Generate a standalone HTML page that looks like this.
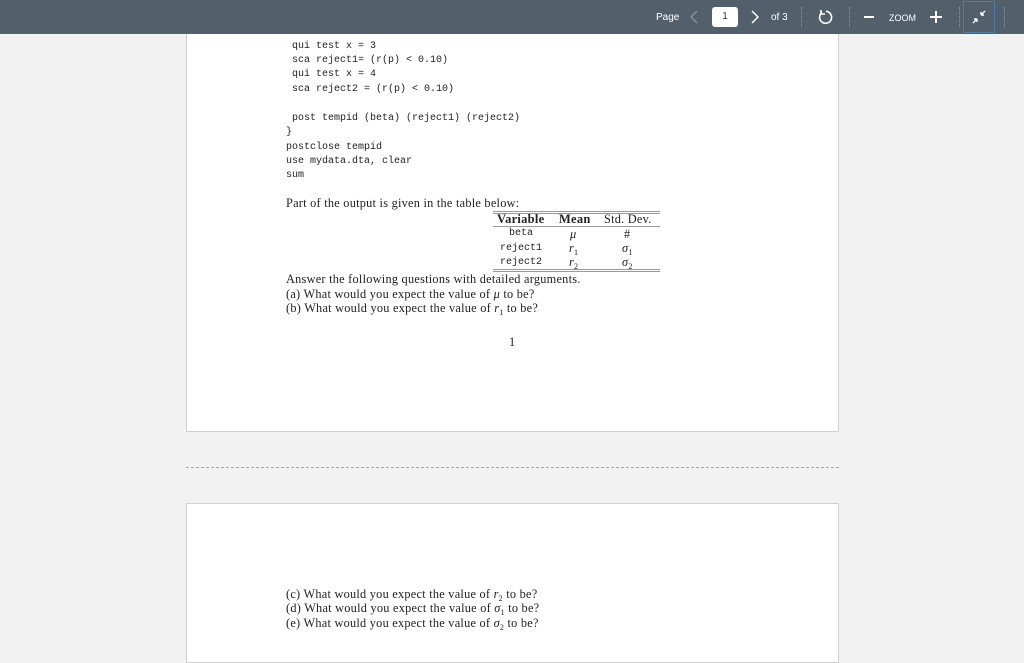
<!DOCTYPE html>
<html><head><meta charset="utf-8">
<style>
*{margin:0;padding:0;box-sizing:border-box}
body{width:1024px;height:640px;overflow:hidden;background:#f2f2f2;position:relative;font-family:"Liberation Serif",serif;color:#222}
.tb{position:absolute;left:0;top:0;width:1024px;height:34px;background:#535f6b;color:#fff;font-family:"Liberation Sans",sans-serif}
.tb .t{position:absolute;font-size:10px;top:12px}
.sep{position:absolute;top:7px;height:20px;border-left:1px dotted #8a96a0}
.page{position:absolute;left:186px;width:653px;background:#fff;border:1px solid #d0d0d0}
.a{position:absolute;white-space:pre;line-height:12px}
.m{font-family:"Liberation Mono",monospace;font-size:10px}
.s{font-size:12.3px;letter-spacing:0.25px}
.u{font-size:8px;position:relative;top:3px;font-style:normal}
.rule{position:absolute;left:493px;width:167px;border-top:1px solid #999}
</style></head><body>
<div class="tb">
 <div class="t" style="left:656px">Page</div>
 <svg style="position:absolute;left:690px;top:10px" width="8" height="14" viewBox="0 0 8 14"><path d="M7 1L1 7l6 6" fill="none" stroke="#8795a2" stroke-width="1.3"/></svg>
 <div style="position:absolute;left:712px;top:7px;width:26px;height:20px;background:#fff;border-radius:3px;color:#333;font-size:10px;text-align:center;line-height:20px">1</div>
 <svg style="position:absolute;left:751px;top:10px" width="8" height="14" viewBox="0 0 8 14"><path d="M1 1l6 6-6 6" fill="none" stroke="#fff" stroke-width="1.5"/></svg>
 <div class="t" style="left:771px">of 3</div>
 <div class="sep" style="left:801px"></div>
 <svg style="position:absolute;left:817px;top:9px" width="16" height="16" viewBox="0 0 16 16"><path d="M5 3.5A6 6 0 1 0 9 2.3" fill="none" stroke="#fff" stroke-width="1.6"/><path d="M4 1v4h4" fill="none" stroke="#fff" stroke-width="1.6"/></svg>
 <div class="sep" style="left:849px"></div>
 <div style="position:absolute;left:864px;top:16px;width:10px;height:2px;background:#fff"></div>
 <div class="t" style="left:889px;font-size:9px;top:13px">ZOOM</div>
 <div style="position:absolute;left:930px;top:16px;width:12px;height:2px;background:#fff"></div>
 <div style="position:absolute;left:935px;top:11px;width:2px;height:12px;background:#fff"></div>
 <div class="sep" style="left:959px"></div>
 <div style="position:absolute;left:963px;top:1px;width:32px;height:32px;border:1px solid #4a7ea8"></div>
 <svg style="position:absolute;left:972px;top:10px" width="14" height="14" viewBox="0 0 14 14"><path d="M1 13L5 9M5 9H2M5 9V12M13 1L9 5M9 5H12M9 5V2" fill="none" stroke="#fff" stroke-width="1.4"/></svg>
 <div class="sep" style="left:1004px"></div>
</div>
<div class="page" style="top:34px;height:398px;border-top:none"></div>
<div style="position:absolute;left:186px;top:467px;width:653px;border-top:1px dashed #aaa"></div>
<div class="page" style="top:503px;height:160px"></div>

<div class="a m" style="left:292px;top:41px">qui test x = 3</div>
<div class="a m" style="left:292px;top:55px">sca reject1= (r(p) &lt; 0.10)</div>
<div class="a m" style="left:292px;top:69px">qui test x = 4</div>
<div class="a m" style="left:292px;top:84px">sca reject2 = (r(p) &lt; 0.10)</div>
<div class="a m" style="left:292px;top:113px">post tempid (beta) (reject1) (reject2)</div>
<div class="a m" style="left:286px;top:127px">}</div>
<div class="a m" style="left:286px;top:142px">postclose tempid</div>
<div class="a m" style="left:286px;top:156px">use mydata.dta, clear</div>
<div class="a m" style="left:286px;top:170px">sum</div>

<div class="a s" style="left:286px;top:197px">Part of the output is given in the table below:</div>
<div class="rule" style="top:211px"></div><div class="rule" style="top:213px"></div>
<div class="a s" style="left:497px;top:213px;font-weight:bold;font-size:12.5px">Variable</div>
<div class="a s" style="left:559px;top:213px;font-weight:bold;font-size:12.5px">Mean</div>
<div class="a s" style="left:604px;top:213px">Std. Dev.</div>
<div class="rule" style="top:226px"></div>
<div class="a m" style="left:509px;top:228px">beta</div>
<div class="a m" style="left:500px;top:243px">reject1</div>
<div class="a m" style="left:500px;top:257px">reject2</div>
<div class="a s" style="left:570px;top:228px;font-style:italic">μ</div>
<div class="a s" style="left:569px;top:242px;font-style:italic">r<span class="u">1</span></div>
<div class="a s" style="left:569px;top:256px;font-style:italic">r<span class="u">2</span></div>
<div class="a s" style="left:624px;top:228px">#</div>
<div class="a s" style="left:622px;top:242px;font-style:italic">σ<span class="u">1</span></div>
<div class="a s" style="left:622px;top:256px;font-style:italic">σ<span class="u">2</span></div>
<div class="rule" style="top:269px"></div><div class="rule" style="top:271px"></div>
<div class="a s" style="left:286px;top:273px">Answer the following questions with detailed arguments.</div>
<div class="a s" style="left:286px;top:288px">(a) What would you expect the value of <i>μ</i> to be?</div>
<div class="a s" style="left:286px;top:302px">(b) What would you expect the value of <i>r</i><span class="u">1</span> to be?</div>
<div class="a s" style="left:509px;top:336px">1</div>

<div class="a s" style="left:286px;top:588px">(c) What would you expect the value of <i>r</i><span class="u">2</span> to be?</div>
<div class="a s" style="left:286px;top:602px">(d) What would you expect the value of <i>σ</i><span class="u">1</span> to be?</div>
<div class="a s" style="left:286px;top:617px">(e) What would you expect the value of <i>σ</i><span class="u">2</span> to be?</div>
</body></html>
